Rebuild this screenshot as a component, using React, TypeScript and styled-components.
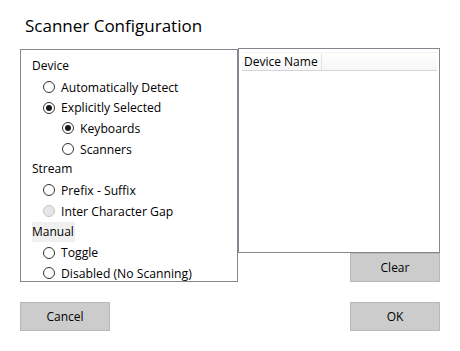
import React from "react";
import styled, { createGlobalStyle } from "styled-components";

const Global = createGlobalStyle`
  html, body { margin: 0; padding: 0; background: #ffffff; }
  body { font-family: "Open Sans", "Noto Sans", sans-serif; color: #000; }
`;

const Window = styled.div`
  width: 460px;
  height: 351px;
  box-sizing: border-box;
  padding: 0 20px 0 20px;
  display: flex;
  flex-direction: column;
  background: #fff;
`;

const Title = styled.div`
  height: 48px;
  box-sizing: border-box;
  padding: 15px 0 0 5px;
  font-size: 17px;
  line-height: 22px;
  color: #000;
`;

const Main = styled.div`
  display: flex;
  align-items: flex-start;
`;

const OptionsPanel = styled.div`
  width: 218px;
  height: 233px;
  flex: none;
  margin-top: 1px;
  box-sizing: border-box;
  border: 1px solid #828790;
  padding: 6px 0 0 11px;
  display: flex;
  flex-direction: column;
  overflow: hidden;
`;

const GroupLabel = styled.div<{ $hover?: boolean }>`
  height: 20.7px;
  flex: none;
  line-height: 20.7px;
  font-size: 12px;
  align-self: flex-start;
  padding-right: 1px;
  background: ${(p) => (p.$hover ? "#f0f0f0" : "transparent")};
`;

const RadioRow = styled.div<{ $level: number }>`
  height: 20.7px;
  flex: none;
  display: flex;
  align-items: center;
  gap: 6px;
  padding-left: ${(p) => p.$level * 19 - 8}px;
  font-size: 12.2px;
`;

const RadioCircle = styled.span<{ $checked?: boolean; $disabled?: boolean }>`
  width: 12px;
  height: 12px;
  box-sizing: border-box;
  border-radius: 50%;
  border: 1px solid ${(p) => (p.$disabled ? "#c4c4c4" : "#333333")};
  background: ${(p) => (p.$disabled ? "#e6e6e6" : "#ffffff")};
  display: flex;
  align-items: center;
  justify-content: center;
  flex: none;
  &::after {
    content: "";
    width: 6px;
    height: 6px;
    border-radius: 50%;
    background: #1a1a1a;
    display: ${(p) => (p.$checked ? "block" : "none")};
  }
`;

const RightColumn = styled.div`
  width: 202px;
  flex: none;
  display: flex;
  flex-direction: column;
  align-items: flex-end;
`;

const ListBox = styled.div`
  width: 202px;
  height: 205px;
  box-sizing: border-box;
  border: 1px solid #828790;
  padding: 3px 2px 0 3px;
`;

const HeaderRow = styled.div`
  display: flex;
  height: 19px;
  box-sizing: border-box;
  border-top: 1px solid #f2f2f2;
  border-bottom: 1px solid #d5d5d5;
  background: linear-gradient(#ffffff, #f6f7f8);
`;

const HeaderCell = styled.div<{ $width?: number }>`
  width: ${(p) => (p.$width ? `${p.$width}px` : "auto")};
  flex: ${(p) => (p.$width ? "none" : "1")};
  box-sizing: border-box;
  border-right: ${(p) => (p.$width ? "1px solid #e3e4e6" : "none")};
  padding-left: 2px;
  font-size: 12px;
  line-height: 17px;
`;

const Button = styled.button`
  width: 90px;
  height: 29px;
  box-sizing: border-box;
  border: 1px solid #b8b8b8;
  background: #cccccc;
  font-family: inherit;
  font-size: 12px;
  color: #000;
  padding: 0;
`;

const Footer = styled.div`
  display: flex;
  justify-content: space-between;
  margin-top: 20px;
`;

type Item =
  | { kind: "label"; text: string; hover?: boolean }
  | { kind: "radio"; text: string; level: number; checked?: boolean; disabled?: boolean };

const items: Item[] = [
  { kind: "label", text: "Device" },
  { kind: "radio", text: "Automatically Detect", level: 1 },
  { kind: "radio", text: "Explicitly Selected", level: 1, checked: true },
  { kind: "radio", text: "Keyboards", level: 2, checked: true },
  { kind: "radio", text: "Scanners", level: 2 },
  { kind: "label", text: "Stream" },
  { kind: "radio", text: "Prefix - Suffix", level: 1 },
  { kind: "radio", text: "Inter Character Gap", level: 1, disabled: true },
  { kind: "label", text: "Manual", hover: true },
  { kind: "radio", text: "Toggle", level: 1 },
  { kind: "radio", text: "Disabled (No Scanning)", level: 1 },
];

export default function App() {
  return (
    <>
      <Global />
      <Window>
        <Title>Scanner Configuration</Title>
        <Main>
          <OptionsPanel>
            {items.map((it) =>
              it.kind === "label" ? (
                <GroupLabel key={it.text} $hover={it.hover}>
                  {it.text}
                </GroupLabel>
              ) : (
                <RadioRow key={it.text} $level={it.level}>
                  <RadioCircle $checked={it.checked} $disabled={it.disabled} />
                  <span>{it.text}</span>
                </RadioRow>
              )
            )}
          </OptionsPanel>
          <RightColumn>
            <ListBox>
              <HeaderRow>
                <HeaderCell $width={80}>Device Name</HeaderCell>
                <HeaderCell />
              </HeaderRow>
            </ListBox>
            <Button>Clear</Button>
          </RightColumn>
        </Main>
        <Footer>
          <Button>Cancel</Button>
          <Button>OK</Button>
        </Footer>
      </Window>
    </>
  );
}
